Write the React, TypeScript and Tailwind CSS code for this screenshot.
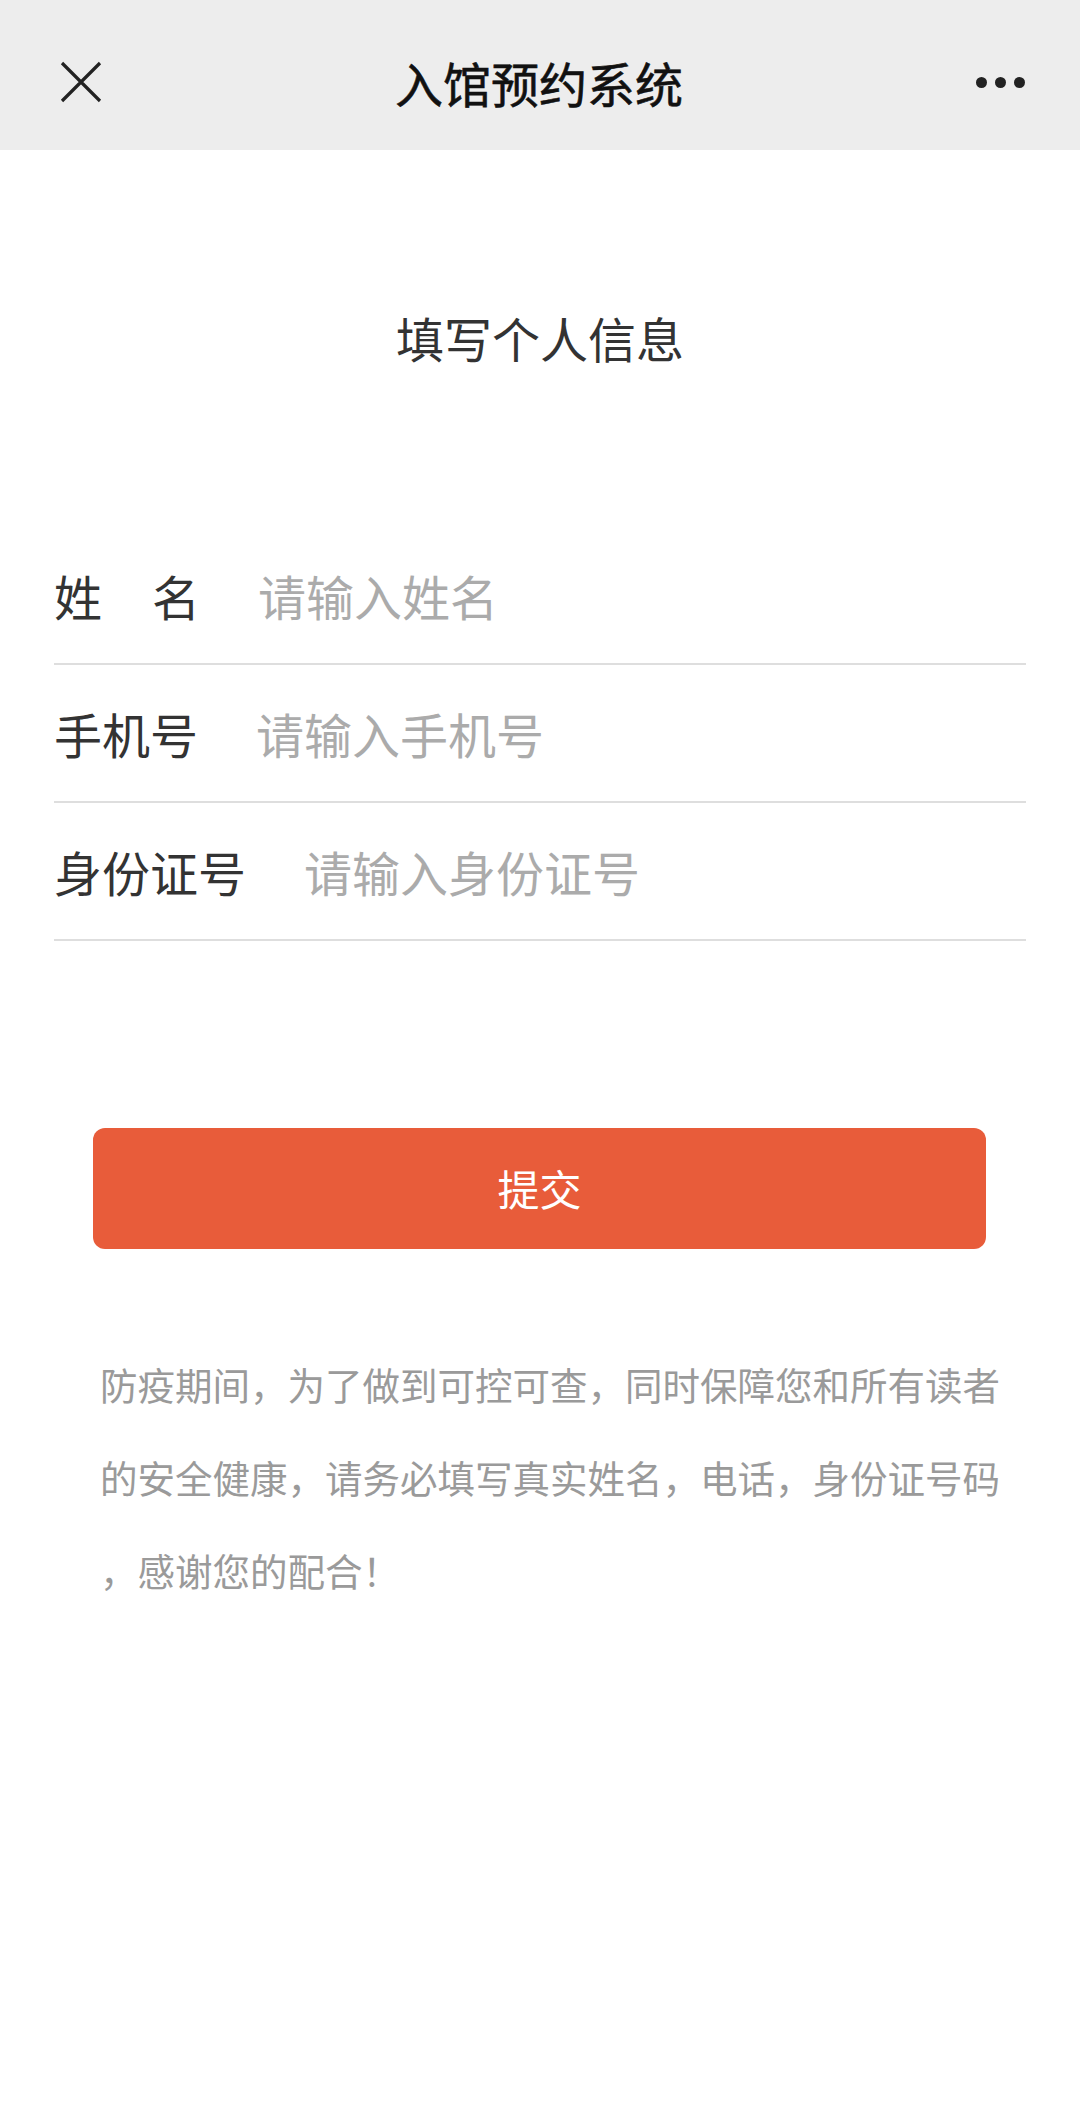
import React from "react";

const font = { fontFamily: '"Noto Sans CJK SC", "Noto Sans", sans-serif' };

function Row({ label, placeholder, labelNode }: { label?: string; placeholder: string; labelNode?: React.ReactNode }) {
  return (
    <div className="flex h-[138px] items-center border-b-2 border-[#dedede]">
      {labelNode ?? <span className="text-[48px] leading-none text-[#333]">{label}</span>}
      <input
        className="ml-[58px] flex-1 bg-transparent text-[48px] leading-none text-[#333] outline-none placeholder:text-[#ababab]"
        style={font}
        placeholder={placeholder}
      />
    </div>
  );
}

export default function App() {
  return (
    <div className="min-h-[2126px] w-[1080px] bg-white" style={font}>
      <header className="flex h-[150px] items-center justify-between bg-[#ededed] pl-[60px] pr-[55px] pt-[14px]">
        <svg width="42" height="42" viewBox="0 0 42 42" className="text-[#222]">
          <path d="M2 2 L40 40 M40 2 L2 40" stroke="currentColor" strokeWidth="3.2" fill="none" />
        </svg>
        <h1 className="text-[48px] font-normal leading-none text-[#111] [-webkit-text-stroke:0.6px_#111]">入馆预约系统</h1>
        <div className="flex items-center gap-[8px]">
          <span className="h-[11px] w-[11px] rounded-full bg-[#222]" />
          <span className="h-[11px] w-[11px] rounded-full bg-[#222]" />
          <span className="h-[11px] w-[11px] rounded-full bg-[#222]" />
        </div>
      </header>

      <h2 className="mt-[154px] text-center text-[48px] leading-[66px] text-[#333]">填写个人信息</h2>

      <div className="mx-[54px] mt-[157px]">
        <Row
          placeholder="请输入姓名"
          labelNode={
            <span className="flex w-[146px] justify-between text-[48px] leading-none text-[#333]">
              <span>姓</span>
              <span>名</span>
            </span>
          }
        />
        <Row label="手机号" placeholder="请输入手机号" />
        <Row label="身份证号" placeholder="请输入身份证号" />
      </div>

      <button className="ml-[93px] mt-[187px] flex h-[121px] w-[893px] items-center justify-center rounded-[12px] bg-[#e85c3a] text-[42px] text-white">
        <span className="-mt-[2px]">提交</span>
      </button>

      <p className="ml-[100px] mt-[88px] w-[920px] whitespace-nowrap text-[37.5px] leading-[93px] text-[#9a9a9a]">
        防疫期间，为了做到可控可查，同时保障您和所有读者
        <br />
        的安全健康，请务必填写真实姓名，电话，身份证号码
        <br />
        ，感谢您的配合！
      </p>
    </div>
  );
}
